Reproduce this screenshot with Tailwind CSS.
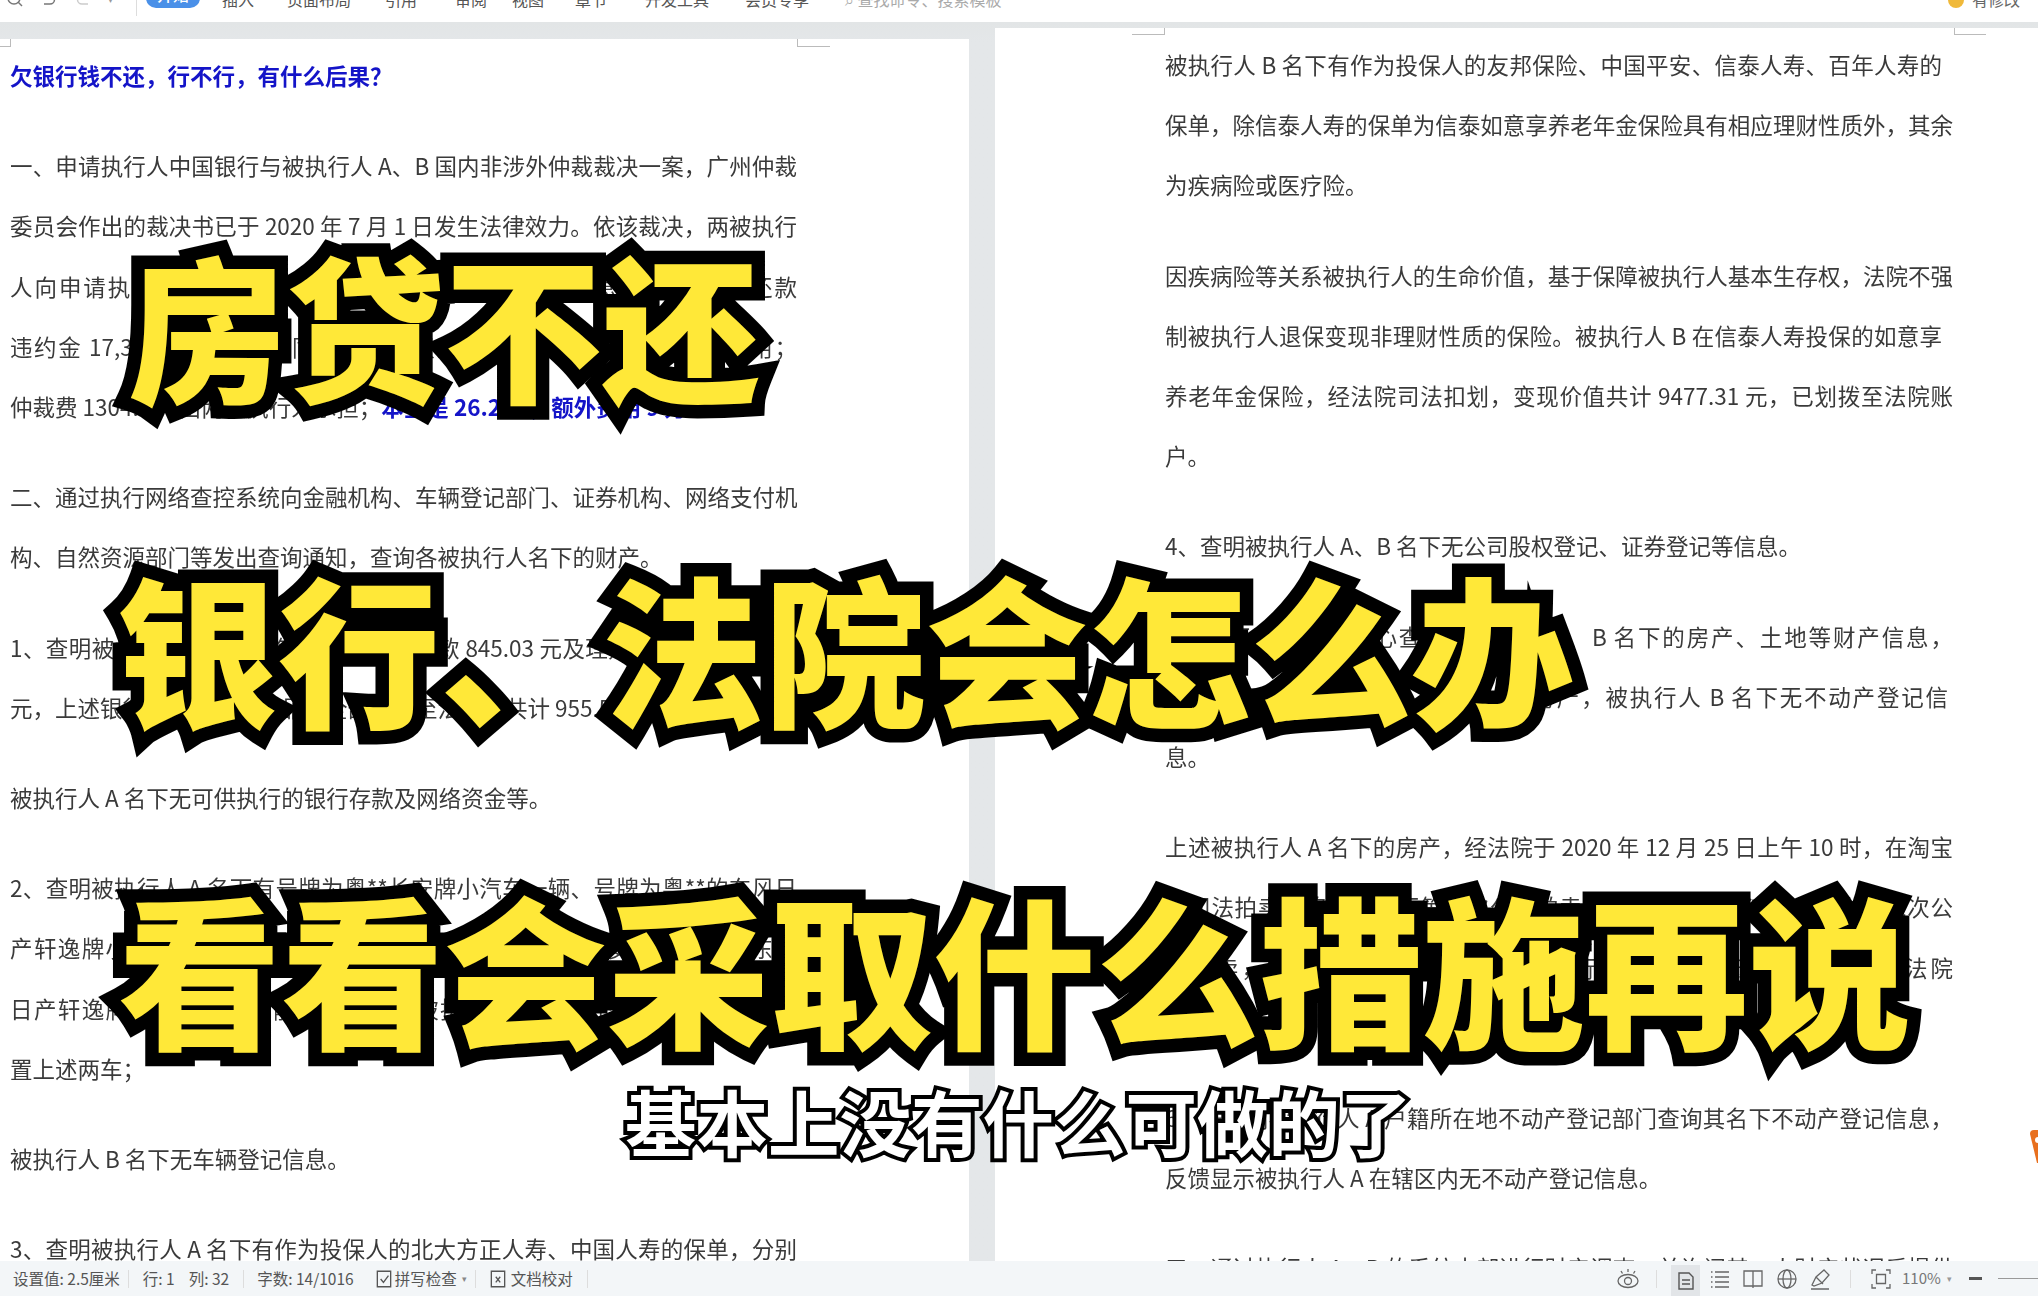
<!DOCTYPE html>
<html lang="zh-CN">
<head>
    <meta charset="UTF-8">
    <title>房贷不还</title>
    <script src="https://cdn.jsdelivr.net/npm/@tailwindcss/browser@4"></script>
</head>
<body class="relative h-[1296px] w-[2038px] overflow-hidden bg-white font-['Noto_Sans_CJK_SC','Noto_Sans',sans-serif] text-[#3a3a3a]">
    <!-- Top ribbon, cut off by the video frame -->
    <header class="flex h-[22px] items-start overflow-hidden bg-white text-[16px] leading-[18px] text-[#666]">
        <div class="-mt-[10px] flex w-[130px] shrink-0 items-center">
            <svg class="ml-[6px] h-[18px] w-[18px]" viewBox="0 0 18 18" fill="none" stroke="#777" stroke-width="1.5"><circle cx="8" cy="8" r="6"/><path d="M12 12l4 4"/></svg>
            <svg class="ml-[14px] h-[18px] w-[18px]" viewBox="0 0 18 18" fill="none" stroke="#777" stroke-width="1.5"><path d="M4 5h8a4 4 0 010 9H6"/></svg>
            <svg class="ml-[20px] h-[18px] w-[18px]" viewBox="0 0 18 18" fill="none" stroke="#ccc" stroke-width="1.5"><path d="M14 5H6a4 4 0 000 9h6"/></svg>
            <span class="ml-[14px] text-[10px] text-[#999]">▾</span>
        </div>
        <div class="ml-[6px] h-[16px] w-px bg-[#ddd]"></div>
        <div class="ml-[9px] -mt-[20px] flex h-[28px] w-[54px] items-center justify-center rounded-[10px] bg-[#4a90e8] text-[16px] font-medium text-white">开始</div>
        <nav class="-mt-[10px] ml-[22px] flex text-[#555]">
            <span class="w-[65px]">插入</span>
            <span class="w-[98px]">页面布局</span>
            <span class="w-[70px]">引用</span>
            <span class="w-[57px]">审阅</span>
            <span class="w-[63px]">视图</span>
            <span class="w-[70px]">章节</span>
            <span class="w-[100px]">开发工具</span>
            <span class="w-[100px]">会员专享</span>
            <span class="text-[#aaa]">⌕ 查找命令、搜索模板</span>
        </nav>
        <div class="-mt-[10px] ml-auto mr-[18px] flex items-center gap-[8px]">
            <span class="h-[18px] w-[16px] rounded-b-full bg-[#f0b93a]"></span>
            <span>有修改</span>
        </div>
    </header>

    <!-- Document area with the two pages -->
    <main class="flex h-[1239px] overflow-hidden whitespace-nowrap bg-gradient-to-b from-[#e2e5e6] to-[#e4e7e9] to-[20px] text-[22.5px] leading-[60.2px] blur-[0.4px]">
        <section class="relative mt-[17px] w-[969px] shrink-0 bg-white pl-[10px] pt-[6px]">
            <span class="absolute left-0 top-0 h-[8px] w-[11px] border-r border-b border-[#bbb]"></span>
            <span class="absolute left-[797px] top-0 h-[8px] w-[33px] border-l border-b border-[#bbb]"></span>
            <p class="mb-[30px] w-[376px] font-bold text-[#1414c8] [text-align-last:justify]">欠银行钱不还，行不行，有什么后果？</p>
            <div class="mb-[30px] w-[787px]">
                <p class="[text-align-last:justify]">一、申请执行人中国银行与被执行人 A、B 国内非涉外仲裁裁决一案，广州仲裁</p>
                <p class="[text-align-last:justify]">委员会作出的裁决书已于 2020 年 7 月 1 日发生法律效力。依该裁决，两被执行</p>
                <p class="[text-align-last:justify]">人向申请执行人中国银行偿还贷款本金 262,000 元、利息 38,000 元及还款</p>
                <p class="[text-align-last:justify]">违约金 17,346.28 元，并共同承担律师费及诉讼保全费等实现债权的费用；</p>
                <p>仲裁费 1304.2 元由两被执行人承担；<span class="font-bold text-[#1414c8]">本金是 26.2 万，额外费用 9 万</span></p>
            </div>
            <div class="mb-[30px] w-[787px]">
                <p class="[text-align-last:justify]">二、通过执行网络查控系统向金融机构、车辆登记部门、证券机构、网络支付机</p>
                <p>构、自然资源部门等发出查询通知，查询各被执行人名下的财产。</p>
            </div>
            <div class="mb-[30px] w-[787px]">
                <p class="[text-align-last:justify]">1、查明被执行人 A 在中国银行等处账户存款 845.03 元及理财产品收益 110.53</p>
                <p>元，上述银行存款及理财产品已全部扣划至法院，共计 955.56 元。</p>
            </div>
            <p class="mb-[30px] w-[538px] [text-align-last:justify]">被执行人 A 名下无可供执行的银行存款及网络资金等。</p>
            <div class="mb-[30px] w-[787px]">
                <p class="[text-align-last:justify]">2、查明被执行人 A 名下有号牌为粤**长安牌小汽车一辆、号牌为粤**的东风日</p>
                <p class="[text-align-last:justify]">产轩逸牌小型轿车一辆，法院已依法查封上述车辆，因长安牌小汽车及东风</p>
                <p class="[text-align-last:justify]">日产轩逸牌小型轿车均未能实际查扣，被执行人亦未配合交出，法院无法处</p>
                <p>置上述两车；</p>
            </div>
            <p class="mb-[30px]">被执行人 B 名下无车辆登记信息。</p>
            <p class="w-[787px] [text-align-last:justify]">3、查明被执行人 A 名下有作为投保人的北大方正人寿、中国人寿的保单，分别</p>
        </section>

        <section class="relative ml-[26px] mt-[6px] flex-1 bg-white pl-[170px] pt-[6px]">
            <span class="absolute left-[137px] top-0 h-[7px] w-[33px] border-r border-b border-[#bbb]"></span>
            <span class="absolute left-[959px] top-0 h-[7px] w-[32px] border-l border-b border-[#bbb]"></span>
            <div class="mb-[30px] w-[788px]">
                <p class="w-[777px] [text-align-last:justify]">被执行人 B 名下有作为投保人的友邦保险、中国平安、信泰人寿、百年人寿的</p>
                <p class="[text-align-last:justify]">保单，除信泰人寿的保单为信泰如意享养老年金保险具有相应理财性质外，其余</p>
                <p>为疾病险或医疗险。</p>
            </div>
            <div class="mb-[30px] w-[788px]">
                <p class="[text-align-last:justify]">因疾病险等关系被执行人的生命价值，基于保障被执行人基本生存权，法院不强</p>
                <p class="w-[777px] [text-align-last:justify]">制被执行人退保变现非理财性质的保险。被执行人 B 在信泰人寿投保的如意享</p>
                <p class="[text-align-last:justify]">养老年金保险，经法院司法扣划，变现价值共计 9477.31 元，已划拨至法院账</p>
                <p>户。</p>
            </div>
            <p class="mb-[30px] w-[634px] [text-align-last:justify]">4、查明被执行人 A、B 名下无公司股权登记、证券登记等信息。</p>
            <div class="mb-[30px] w-[788px]">
                <p class="[text-align-last:justify]">5、向不动产登记中心查询被执行人 A、B 名下的房产、土地等财产信息，</p>
                <p class="w-[783px] [text-align-last:justify]">反馈显示被执行人 A 名下拥有一处房产，被执行人 B 名下无不动产登记信</p>
                <p>息。</p>
            </div>
            <div class="mb-[30px] w-[788px]">
                <p class="[text-align-last:justify]">上述被执行人 A 名下的房产，经法院于 2020 年 12 月 25 日上午 10 时，在淘宝</p>
                <p class="[text-align-last:justify]">网司法拍卖网络平台进行第一次公开拍卖，因无人竞买而流拍；后进行二次公</p>
                <p class="[text-align-last:justify]">开拍卖，仍流拍。申请执行人中国银行不同意以物抵债，该房产经法院</p>
                <p>依法解除查封，退回被执行人；</p>
            </div>
            <div class="mb-[30px] w-[788px]">
                <p class="[text-align-last:justify]">6、法院向被执行人 A 户籍所在地不动产登记部门查询其名下不动产登记信息，</p>
                <p class="w-[495px] [text-align-last:justify]">反馈显示被执行人 A 在辖区内无不动产登记信息。</p>
            </div>
            <p class="w-[788px] [text-align-last:justify]">三、通过执行人 A、B 的系统内部进行财产调查，并询问其二人财产状况后提供</p>
        </section>
    </main>

    <!-- Status bar -->
    <footer class="flex h-[35px] items-center overflow-hidden bg-[#f3f6f8] text-[15.5px] text-[#555]">
        <span class="ml-[13px]">设置值: 2.5厘米</span>
        <span class="ml-[8px] h-[18px] w-px bg-[#ddd]"></span>
        <span class="ml-[14px]">行: 1</span>
        <span class="ml-[14px]">列: 32</span>
        <span class="ml-[14px] h-[18px] w-px bg-[#ddd]"></span>
        <span class="ml-[13px]">字数: 14/1016</span>
        <svg class="ml-[20px] h-[20px] w-[20px]" viewBox="0 0 18 18" fill="none" stroke="#555" stroke-width="1.2"><path d="M3 2h12v14H3zM6 9l2.5 3L13 6"/></svg>
        <span class="ml-[1px]">拼写检查</span>
        <span class="ml-[5px] text-[9px] text-[#888]">▾</span>
        <span class="ml-[8px] h-[18px] w-px bg-[#ddd]"></span>
        <svg class="ml-[12px] h-[20px] w-[20px]" viewBox="0 0 18 18" fill="none" stroke="#555" stroke-width="1.2"><path d="M3 2h12v14H3zM7 7l4 5M11 7l-4 5"/></svg>
        <span class="ml-[3px]">文档校对</span>
        <span class="ml-[14px] h-[18px] w-px bg-[#ddd]"></span>

        <div class="ml-auto flex h-[35px] shrink-0 items-center">
            <svg class="h-[22px] w-[22px]" viewBox="0 0 22 22" fill="none" stroke="#666" stroke-width="1.3"><ellipse cx="11" cy="13" rx="10" ry="6.5"/><circle cx="11" cy="13" r="3.5"/><path d="M11 1v3M4 3l1.5 2.5M18 3l-1.5 2.5"/></svg>
            <span class="ml-[17px] h-[18px] w-px bg-[#ddd]"></span>
            <div class="ml-[14px] mt-[4px] flex h-[31px] w-[29px] items-center justify-center bg-[#e2e5e8]">
                <svg class="h-[20px] w-[18px]" viewBox="0 0 18 20" fill="none" stroke="#555" stroke-width="1.4"><path d="M2 2h10l4 4v12H2zM5 9h8M5 13h8"/></svg>
            </div>
            <svg class="ml-[10px] h-[20px] w-[20px]" viewBox="0 0 20 20" fill="none" stroke="#666" stroke-width="1.3"><path d="M5 3h14M5 8h14M5 13h14M5 18h14M1 3h1.5M1 8h1.5M1 13h1.5M1 18h1.5"/></svg>
            <svg class="ml-[13px] h-[20px] w-[20px]" viewBox="0 0 20 20" fill="none" stroke="#666" stroke-width="1.3"><path d="M1 2h18v15H1zM10 2v17"/></svg>
            <svg class="ml-[14px] h-[20px] w-[20px]" viewBox="0 0 20 20" fill="none" stroke="#666" stroke-width="1.3"><circle cx="10" cy="10" r="9"/><ellipse cx="10" cy="10" rx="4" ry="9"/><path d="M1 10h18"/></svg>
            <svg class="ml-[13px] h-[22px] w-[22px]" viewBox="0 0 22 22" fill="none" stroke="#666" stroke-width="1.3"><path d="M2 17l4-8 8-7 5 5-7 8-8 3zM6 9l7 7M1 21h18"/></svg>
            <span class="ml-[18px] h-[18px] w-px bg-[#ddd]"></span>
            <svg class="ml-[20px] h-[20px] w-[20px]" viewBox="0 0 20 20" fill="none" stroke="#666" stroke-width="1.3"><path d="M1 5V1h4M15 1h4v4M19 15v4h-4M5 19H1v-4M5.5 5.5h9v9h-9z"/></svg>
            <span class="ml-[11px] w-[38px] text-[15px] text-[#777]">110%</span>
            <span class="ml-[7px] w-[8px] text-[9px] text-[#999]">▾</span>
            <span class="ml-[14px] h-[3px] w-[13px] bg-[#555]"></span>
            <span class="ml-[16px] h-[1px] w-[40px] bg-[#999]"></span>
        </div>
    </footer>

    <!-- Orange widget at the right edge -->
    <svg class="absolute left-[2030px] top-[1130px] h-[33px] w-[8px]" viewBox="0 0 8 33"><path d="M0 4Q0 0 4 0H8V33H7Z" fill="#e8701f"/><circle cx="8" cy="10" r="3" fill="#fff"/></svg>

    <!-- Big captions burned into the video -->
    <svg class="absolute left-0 top-0 h-[1296px] w-[2038px] fill-[#ffe838] stroke-black stroke-[27px] font-black [paint-order:stroke] [stroke-linejoin:miter] [stroke-miterlimit:6]" viewBox="0 0 2038 1296">
        <text x="128" y="391" font-size="158">房贷不还</text>
        <text x="116" y="716" font-size="162">银行、法院会怎么办</text>
        <text x="118" y="1036" font-size="163">看看会采取什么措施再说</text>
    </svg>
    <div class="absolute left-[625px] top-[1080px] whitespace-nowrap text-[71.5px] leading-[80px] font-bold text-white [paint-order:stroke_fill] [-webkit-text-stroke:8px_#000]">基本上没有什么可做的了</div>
</body>
</html>
